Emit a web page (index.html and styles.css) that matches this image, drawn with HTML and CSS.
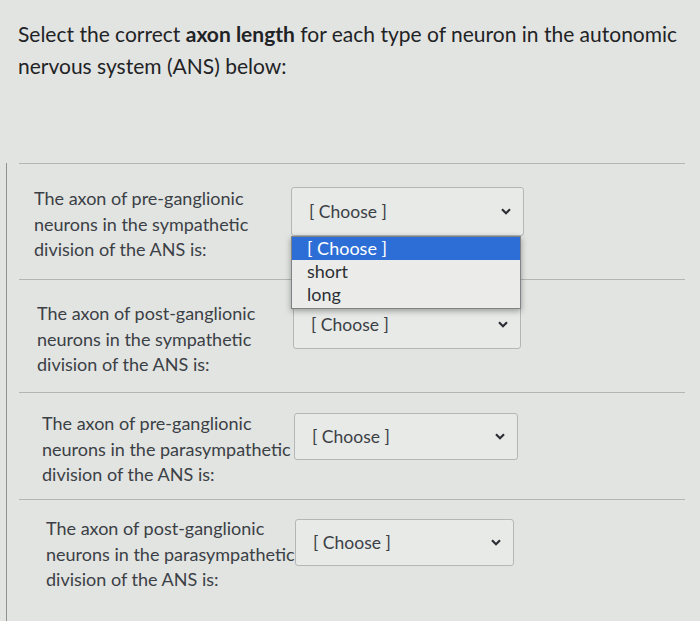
FILE: index.html
```html
<!DOCTYPE html>
<html lang="en">

<head>
    <meta charset="UTF-8" />
    <meta name="viewport" content="width=device-width, initial-scale=1.0" />
    <title>Quiz Question</title>
    <link rel="stylesheet" href="styles.css">
</head>

<body>

    <div class="question-text">
        Select the correct <strong>axon length</strong> for each type of neuron in the autonomic
        nervous system (ANS) below:
    </div>

    <div class="answers">
        <div class="answer-row">
            <div class="answer-label">The axon of pre-ganglionic neurons in the sympathetic division of the ANS is:</div>
            <div class="select-wrap open">
                <div class="select-box">
                    <span>[ Choose ]</span>
                    <svg class="chevron" width="10" height="7" viewBox="0 0 10 7"><path d="M1 1.2 L5 5.2 L9 1.2" fill="none" stroke="#2b2f33" stroke-width="2.2" /></svg>
                </div>
                <!-- open option list -->
                <ul class="option-list">
                    <li class="selected">[ Choose ]</li>
                    <li>short</li>
                    <li>long</li>
                </ul>
            </div>
        </div>

        <div class="answer-row">
            <div class="answer-label">The axon of post-ganglionic neurons in the sympathetic division of the ANS is:</div>
            <div class="select-wrap">
                <div class="select-box">
                    <span>[ Choose ]</span>
                    <svg class="chevron" width="10" height="7" viewBox="0 0 10 7"><path d="M1 1.2 L5 5.2 L9 1.2" fill="none" stroke="#2b2f33" stroke-width="2.2" /></svg>
                </div>
            </div>
        </div>

        <div class="answer-row">
            <div class="answer-label">The axon of pre-ganglionic neurons in the parasympathetic division of the ANS is:</div>
            <div class="select-wrap">
                <div class="select-box">
                    <span>[ Choose ]</span>
                    <svg class="chevron" width="10" height="7" viewBox="0 0 10 7"><path d="M1 1.2 L5 5.2 L9 1.2" fill="none" stroke="#2b2f33" stroke-width="2.2" /></svg>
                </div>
            </div>
        </div>

        <div class="answer-row">
            <div class="answer-label">The axon of post-ganglionic neurons in the parasympathetic division of the ANS is:</div>
            <div class="select-wrap">
                <div class="select-box">
                    <span>[ Choose ]</span>
                    <svg class="chevron" width="10" height="7" viewBox="0 0 10 7"><path d="M1 1.2 L5 5.2 L9 1.2" fill="none" stroke="#2b2f33" stroke-width="2.2" /></svg>
                </div>
            </div>
        </div>
    </div>

</body>

</html>
```
FILE: styles.css
```css
body {
    margin: 0;
    height: 621px;
    overflow: hidden;
    font-family: Lato, "Open Sans", sans-serif;
    background: #e2e4e1;
    color: #383d42;
}

.question-text {
    padding: 18px 2px 0 18px;
    font-size: 21px;
    line-height: 32px;
    color: #1f2326;
    height: 146px;
    box-sizing: border-box;
}

.answers {
    margin: 17px 15px 0 6px;
    border-left: 1px solid #8e9190;
    height: 460px;
}

.answer-row {
    display: flex;
    align-items: flex-start;
    margin-left: 12px;
    padding: 22px 0 0 15px;
    height: 116px;
    box-sizing: border-box;
    border-top: 1px solid #b3b6b7;
}

.answer-label {
    width: 257px;
    flex-shrink: 0;
    font-size: 18px;
    line-height: 25.5px;
    color: #3b4046;
}

.select-wrap {
    position: relative;
    margin-top: 1px;
}

.select-wrap.open {
    z-index: 2;
}

.select-box {
    width: 233px;
    height: 49px;
    box-sizing: border-box;
    border: 1px solid #b4b7b8;
    border-radius: 3px;
    background: #e8eae7;
    display: flex;
    align-items: center;
    justify-content: space-between;
    padding: 0 12px 0 17px;
    font-size: 17.5px;
    color: #3b4046;
}

/* the lower rows sit a little further in */
.answer-row:nth-child(2) {
    height: 113px;
    padding-top: 21px;
    padding-left: 18px;
}

.answer-row:nth-child(2) .answer-label {
    width: 256px;
}

.answer-row:nth-child(2) .select-wrap {
    margin-top: -1px;
}

.answer-row:nth-child(2) .select-box {
    width: 228px;
}

.answer-row:nth-child(3) {
    height: 107px;
    padding-top: 18px;
    padding-left: 23px;
}

.answer-row:nth-child(3) .answer-label {
    width: 252px;
}

.answer-row:nth-child(3) .select-wrap {
    margin-top: 2px;
}

.answer-row:nth-child(3) .select-box {
    width: 224px;
    height: 47px;
}

.answer-row:nth-child(4) {
    padding-top: 16px;
    padding-left: 27px;
}

.answer-row:nth-child(4) .answer-label {
    width: 249px;
}

.answer-row:nth-child(4) .select-wrap {
    margin-top: 3px;
}

.answer-row:nth-child(4) .select-box {
    width: 219px;
    height: 47px;
}

.chevron {
    display: block;
}

.option-list {
    position: absolute;
    top: 49px;
    left: 0;
    width: 230px;
    margin: 0;
    padding: 0 0 2px 0;
    list-style: none;
    background: #ebece9;
    border: 1px solid #7f8385;
    box-shadow: 0 2px 6px rgba(0, 0, 0, 0.35);
    box-sizing: border-box;
    font-size: 18px;
    color: #2c3035;
}

.option-list li {
    height: 23px;
    line-height: 23px;
    padding-left: 15px;
}

.option-list li.selected {
    background: #2d6ed6;
    color: #ffffff;
}
```
